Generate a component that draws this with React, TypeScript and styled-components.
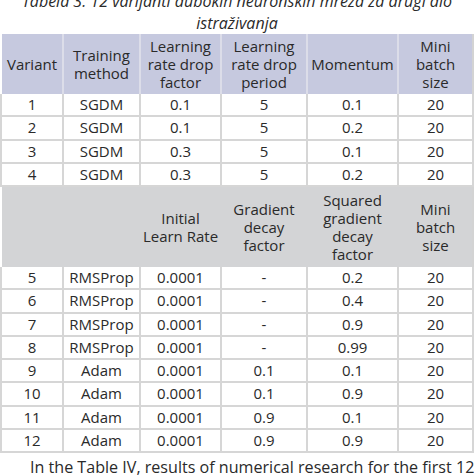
import React from "react";
import styled, { createGlobalStyle } from "styled-components";

const Global = createGlobalStyle`
  html, body { margin: 0; padding: 0; background: #ffffff; }
  body { width: 474px; height: 476px; overflow: hidden; font-family: "Open Sans", "Noto Sans", sans-serif; color: #2a2a2a; }
`;

const Page = styled.div`
  width: 474px;
  display: flex;
  flex-direction: column;
`;

const Caption = styled.div`
  margin-top: -10px;
  text-align: center;
  font-style: italic;
  font-size: 16px;
  line-height: 22px;
  color: #2a2a2a;
  white-space: nowrap;
`;

const Table = styled.table`
  margin-top: 0;
  width: 474px;
  table-layout: fixed;
  border-collapse: separate;
  border-spacing: 0;
  font-size: 15px;
  color: #2a2a2a;
`;

type Tone = "blue" | "gray";

const HeadCell = styled.td<{ $tone: Tone; $lines: number }>`
  background: ${(p) => (p.$tone === "blue" ? "#c6c9df" : "#d3d4d6")};
  border-right: 2px solid ${(p) => (p.$tone === "blue" ? "#dcdde9" : "#d3d4d6")};
  padding: ${(p) => (p.$lines === 3 ? "3px 0" : "4px 0")};
  height: ${(p) => p.$lines * 18}px;
  line-height: 18px;
  text-align: center;
  vertical-align: middle;
  &:first-child { border-left: 2px solid #ffffff; }
  &:last-child { border-right: 2px solid #d3d3d3; }
`;

const Cell = styled.td`
  border-right: 2px solid #d6d6d6;
  border-bottom: 2px solid #d6d6d6;
  height: 21.25px;
  line-height: 21.25px;
  padding: 0;
  text-align: center;
  vertical-align: middle;
  white-space: nowrap;
  &:first-child { border-left: 2px solid #d6d6d6; }
`;

const Paragraph = styled.p`
  margin: 4px 0 0 0;
  padding-left: 30px;
  font-size: 16.1px;
  line-height: 20px;
  white-space: nowrap;
  color: #2a2a2a;
`;

const widths = [64, 77, 81, 86, 91, 75];

const head1 = [
  ["Variant"],
  ["Training", "method"],
  ["Learning", "rate drop", "factor"],
  ["Learning", "rate drop", "period"],
  ["Momentum"],
  ["Mini", "batch", "size"],
];

const head2 = [
  [],
  [],
  ["Initial", "Learn Rate"],
  ["Gradient", "decay", "factor"],
  ["Squared", "gradient", "decay", "factor"],
  ["Mini", "batch", "size"],
];

const rows1 = [
  ["1", "SGDM", "0.1", "5", "0.1", "20"],
  ["2", "SGDM", "0.1", "5", "0.2", "20"],
  ["3", "SGDM", "0.3", "5", "0.1", "20"],
  ["4", "SGDM", "0.3", "5", "0.2", "20"],
];

const rows2 = [
  ["5", "RMSProp", "0.0001", "-", "0.2", "20"],
  ["6", "RMSProp", "0.0001", "-", "0.4", "20"],
  ["7", "RMSProp", "0.0001", "-", "0.9", "20"],
  ["8", "RMSProp", "0.0001", "-", "0.99", "20"],
  ["9", "Adam", "0.0001", "0.1", "0.1", "20"],
  ["10", "Adam", "0.0001", "0.1", "0.9", "20"],
  ["11", "Adam", "0.0001", "0.9", "0.1", "20"],
  ["12", "Adam", "0.0001", "0.9", "0.9", "20"],
];

const HeaderRow: React.FC<{ cells: string[][]; tone: Tone; lines: number }> = ({ cells, tone, lines }) => (
  <tr>
    {cells.map((c, i) => (
      <HeadCell key={i} $tone={tone} $lines={lines}>
        {c.map((l, j) => (
          <React.Fragment key={j}>
            {j > 0 && <br />}
            {l}
          </React.Fragment>
        ))}
      </HeadCell>
    ))}
  </tr>
);

const DataRows: React.FC<{ rows: string[][] }> = ({ rows }) => (
  <>
    {rows.map((r, i) => (
      <tr key={i}>
        {r.map((v, j) => (
          <Cell key={j}>{v}</Cell>
        ))}
      </tr>
    ))}
  </>
);

export default function App() {
  return (
    <Page>
      <Global />
      <Caption>
        Tabela 3. 12 varijanti dubokih neuronskih mreža za drugi dio
        <br />
        istraživanja
      </Caption>
      <Table>
        <colgroup>
          {widths.map((w, i) => (
            <col key={i} style={{ width: w }} />
          ))}
        </colgroup>
        <tbody>
          <HeaderRow cells={head1} tone="blue" lines={3} />
          <DataRows rows={rows1} />
          <HeaderRow cells={head2} tone="gray" lines={4} />
          <DataRows rows={rows2} />
        </tbody>
      </Table>
      <Paragraph>In the Table IV, results of numerical research for the first 12</Paragraph>
    </Page>
  );
}
